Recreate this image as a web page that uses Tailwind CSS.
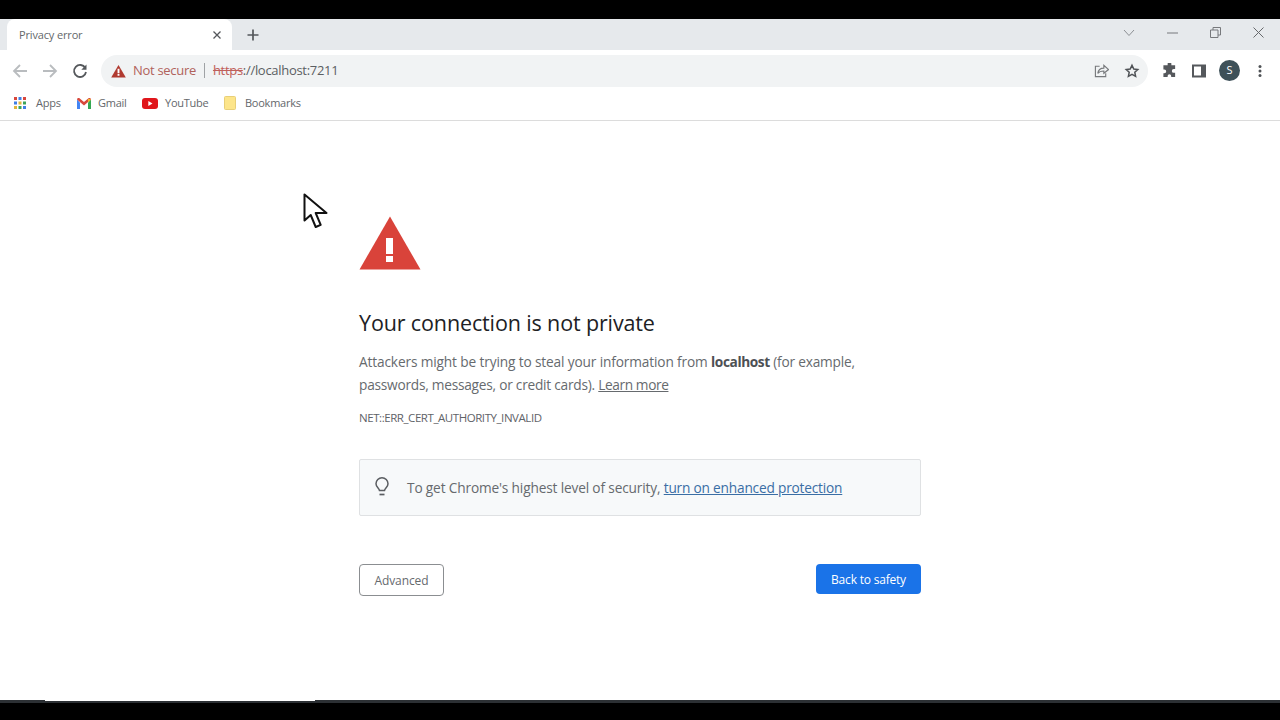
<!DOCTYPE html>
<html lang="en">
<head>
<meta charset="utf-8">
<title>Privacy error</title>
<script src="https://cdn.jsdelivr.net/npm/@tailwindcss/browser@4"></script>
</head>
<body class="bg-black overflow-hidden">
<div class="relative w-[1280px] h-[720px] flex flex-col bg-black font-['Open_Sans','Noto_Sans',sans-serif]">
  <div class="h-[19px] shrink-0 bg-black"></div>

  <!-- tab strip -->
  <div class="h-[31px] shrink-0 bg-[#e6e9ec] flex items-stretch">
    <div class="w-[7px] bg-[#e6e9ec]"></div>
    <div class="w-[225px] bg-white rounded-t-[8px] flex items-center pl-[12px] pr-[9px]">
      <span class="flex-1 text-[11px] text-[#64676b] tracking-[-0.15px] pt-[1px]">Privacy error</span>
      <svg class="w-[12px] h-[12px]" viewBox="0 0 12 12" fill="none" stroke="#55585c" stroke-width="1.300"><path d="M2.500 2.500l7 7M9.500 2.500l-7 7"/></svg>
    </div>
    <div class="w-[42px] flex items-center justify-center">
      <svg class="w-[14px] h-[14px]" viewBox="0 0 14 14" fill="none" stroke="#54575b" stroke-width="1.700"><path d="M7 1.500v11M1.500 7h11"/></svg>
    </div>
    <div class="flex-1"></div>
    <div class="flex items-center pb-[4px]">
      <svg class="w-[12px] h-[8px] mr-[32px]" viewBox="0 0 12 8" fill="none" stroke="#8d9094" stroke-width="1"><path d="M1 1l5 5.500L11 1"/></svg>
      <svg class="w-[11px] h-[2px] mr-[32px]" viewBox="0 0 11 2" fill="none" stroke="#77797c" stroke-width="1"><path d="M0 1h11"/></svg>
      <svg class="w-[11px] h-[11px] mr-[32px]" viewBox="0 0 11 11" fill="none" stroke="#77797c" stroke-width="1"><path d="M.5 3h7.500v7.500h-7.500zM3 3V.5h7.500V8H8"/></svg>
      <svg class="w-[11px] h-[11px] mr-[16px]" viewBox="0 0 11 11" fill="none" stroke="#66686b" stroke-width="1"><path d="M.5.5l10 10M10.500.5l-10 10"/></svg>
    </div>
  </div>

  <!-- toolbar -->
  <div class="h-[41px] shrink-0 bg-white flex items-center">
    <div class="w-[101px] flex items-center pl-[12px] gap-[14px]">
      <svg class="w-[16px] h-[16px]" viewBox="0 0 16 16" fill="none" stroke="#b9bcbf" stroke-width="1.800"><path d="M15 8H2M8 2L2 8l6 6"/></svg>
      <svg class="w-[16px] h-[16px]" viewBox="0 0 16 16" fill="none" stroke="#b9bcbf" stroke-width="1.800"><path d="M1 8h13M8 2l6 6-6 6"/></svg>
      <svg class="w-[16px] h-[16px]" viewBox="0 0 16 16" fill="none" stroke="#55585c" stroke-width="1.800"><path d="M13.300 5A6 6 0 1 0 14 9"/><path d="M14.500 1.500v5.200H9.300z" fill="#55585c" stroke="none"/></svg>
    </div>
    <div class="w-[1047px] h-[32px] bg-[#f1f3f4] rounded-full flex items-center pl-[10px] pr-[8px]">
      <svg class="w-[15px] h-[14px] mr-[7px]" viewBox="0 0 16 14"><path d="M8 .5L15.800 13.800H.2z" fill="#b03a30"/><path d="M7 4.500h2v4.800H7zM7 10.300h2V12H7z" fill="#fff"/></svg>
      <span class="text-[13px] text-[#b0625b] tracking-[-0.3px]">Not secure</span>
      <span class="w-px h-[15px] bg-[#9fa2a5] ml-[8px] mr-[8px]"></span>
      <span class="text-[13px] text-[#5b5e62] tracking-[-0.3px] flex-1"><span class="text-[#c0605a] line-through">https</span>://localhost:7211</span>
      <svg class="w-[15px] h-[15px] mr-[15px]" viewBox="0 0 16 16" fill="none" stroke="#77797c" stroke-width="1.200"><path d="M6 3.500H1.500v11h11V11"/><path d="M4 11c.5-3.500 3-5.500 6.500-5.500V2.500l5 4.500-5 4V8.500C8 8.500 5.500 9 4 11z"/></svg>
      <svg class="w-[16px] h-[16px]" viewBox="0 0 16 16" fill="none" stroke="#4f5256" stroke-width="1.500"><path d="M8 2.300l1.800 3.700 4 .5-3 2.800.8 4L8 11.300l-3.600 2 .8-4-3-2.800 4-.5z"/></svg>
    </div>
    <div class="flex items-center pl-[14px]">
      <svg class="w-[15px] h-[15px] mr-[15px]" viewBox="0 0 16 16" fill="#55585c"><path d="M6 1a2 2 0 0 1 4 0v1.500h4v4h-1.500a2 2 0 0 0 0 4H14V15H9.800v-1.200a1.900 1.900 0 0 0-3.800 0V15H1.500v-4.200h1a2 2 0 0 0 0-4h-1V2.500H6z"/></svg>
      <svg class="w-[14px] h-[14px] mr-[13px]" viewBox="0 0 14 14"><path d="M0 .5h14v13H0z" fill="#55585c"/><path d="M2 2.500h7v9H2z" fill="#fff"/></svg>
      <div class="w-[21px] h-[21px] rounded-full bg-[#3e5159] text-white text-[11px] flex items-center justify-center mr-[18px]">S</div>
      <svg class="w-[4px] h-[12px]" viewBox="0 0 4 12" fill="#4f5256"><circle cx="2" cy="1.500" r="1.500"/><circle cx="2" cy="6" r="1.500"/><circle cx="2" cy="10.500" r="1.500"/></svg>
    </div>
  </div>

  <!-- bookmarks -->
  <div class="h-[29px] shrink-0 bg-white flex items-center pl-[14px] text-[11px] text-[#64676b] tracking-[-0.24px] pb-[5px]">
    <svg class="w-[12px] h-[12px] mr-[10px]" viewBox="0 0 12 12">
      <rect x="0" y="0" width="3" height="3" fill="#d9463c"/><rect x="4.500" y="0" width="3" height="3" fill="#3f7fe6"/><rect x="9" y="0" width="3" height="3" fill="#d9463c"/>
      <rect x="0" y="4.500" width="3" height="3" fill="#3f7fe6"/><rect x="4.500" y="4.500" width="3" height="3" fill="#e0b53a"/><rect x="9" y="4.500" width="3" height="3" fill="#3aa35a"/>
      <rect x="0" y="9" width="3" height="3" fill="#e0b53a"/><rect x="4.500" y="9" width="3" height="3" fill="#3aa35a"/><rect x="9" y="9" width="3" height="3" fill="#3f7fe6"/>
    </svg>
    <span class="w-[41px]">Apps</span>
    <svg class="w-[14px] h-[11px] mr-[7px]" viewBox="0 0 14 11">
      <path d="M0 1.500V11h3V4.500z" fill="#4285f4"/><path d="M14 1.500V11h-3V4.500z" fill="#34a853"/>
      <path d="M0 1.500C0 0 1.800-.4 2.800.5L7 4l4.200-3.500C12.200-.4 14 0 14 1.500L7 7.500z" fill="#d8483c"/><path d="M11 .8l3 .7L11 4.500z" fill="#f0bb2c"/>
    </svg>
    <span class="w-[44px]">Gmail</span>
    <svg class="w-[16px] h-[11px] mr-[7px]" viewBox="0 0 16 11"><rect width="16" height="11" rx="3" fill="#e0161b"/><path d="M6.300 3v5l4.200-2.500z" fill="#fff"/></svg>
    <span class="w-[59px]">YouTube</span>
    <svg class="w-[12px] h-[14px] mr-[9px]" viewBox="0 0 12 14"><rect x=".5" y=".5" width="11" height="13" rx="1" fill="#fde58a" stroke="#e8cf78"/></svg>
    <span>Bookmarks</span>
  </div>
  <div class="h-px shrink-0 bg-[#dcdcdc]"></div>

  <!-- page -->
  <div class="flex-1 bg-white pl-[359px] pt-[95px] flex flex-col items-start">
    <svg class="w-[62px] h-[54px]" viewBox="0 0 62 54">
      <path d="M31 .5L61.500 53.500H.5z" fill="#d9433a"/>
      <path d="M27 22h7v16h-7zM27 40h7v6h-7z" fill="#fff"/>
    </svg>
    <h1 class="mt-[38px] h-[30px] text-[21.500px] leading-[30px] font-normal text-[#202124] tracking-[-0.13px]">Your connection is not private</h1>
    <p class="mt-[13px] w-[562px] text-[13.700px] leading-[22.500px] text-[#666a6e] tracking-[-0.14px]">Attackers might be trying to steal your information from <b class="font-bold text-[#4d5054] tracking-[-0.4px]">localhost</b> <span class="tracking-[-0.2px]">(for example,</span><br><span class="tracking-[-0.24px]">passwords, messages, or credit cards).</span> <a class="underline tracking-[-0.4px]">Learn more</a></p>
    <p class="mt-[14px] text-[11.500px] leading-[16px] text-[#5f6368] tracking-[-0.44px]">NET::ERR_CERT_AUTHORITY_INVALID</p>
    <div class="mt-[33px] w-[562px] h-[57px] bg-[#f7f9fa] border border-[#dfe1e3] rounded-[2px] flex items-center pl-[15px]">
      <svg class="w-[14px] h-[19px] mr-[18px] mb-[2px]" viewBox="0 0 14 19" fill="none" stroke="#5a5d61" stroke-width="1.500"><path d="M4.500 13.500C4 11 1 10 1 6.800a6 6 0 0 1 12 0C13 10 10 11 9.500 13.500z"/><path d="M4.500 17.500h5" stroke-width="1.700"/></svg>
      <span class="text-[13.700px] text-[#666a6e] tracking-[-0.16px] pt-[1px]">To get Chrome's highest level of security, <a class="underline text-[#3a6ea5] tracking-[-0.2px]">turn on enhanced protection</a></span>
    </div>
    <div class="mt-[48px] w-[562px] flex items-start justify-between">
      <button class="w-[85px] h-[32px] border border-[#8b8e91] rounded-[4px] bg-white text-[12px] text-[#666a6e] tracking-[-0.1px] pt-[1px]">Advanced</button>
      <button class="w-[105px] h-[30px] rounded-[4px] bg-[#1a73e8] text-[12px] text-white tracking-[-0.2px] pt-[1px]">Back to safety</button>
    </div>
  </div>

  <!-- bottom bar -->
  <div class="h-[3px] shrink-0 bg-[#2c3034] flex">
    <div class="ml-[45px] w-[270px] h-[1px] bg-white"></div>
  </div>
  <div class="h-[17px] shrink-0 bg-black"></div>

  <!-- mouse pointer -->
  <svg class="absolute left-[303px] top-[192px] w-[26px] h-[40px]" viewBox="0 0 26 38"><path d="M1.500 1.500V27.500l6.200-5.500 5 12 5-2.200-5-11.800H23.500z" fill="#fff" stroke="#111" stroke-width="2" stroke-linejoin="round"/></svg>
</div>
</body>
</html>
